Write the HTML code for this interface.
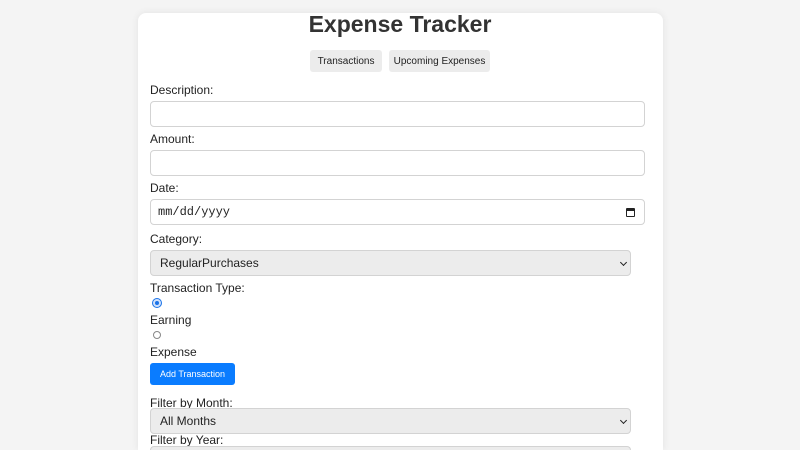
<!DOCTYPE html>
<html style="height:450px;overflow:hidden"><head><style>
*{box-sizing:border-box;margin:0;padding:0}
body{width:800px;height:450px;overflow:hidden;background:#f4f4f4;font-family:"Liberation Sans",sans-serif;color:#222;position:relative}
.card{position:absolute;left:138px;top:13px;width:525px;height:437px;background:#fff;border-radius:8px 8px 0 0;box-shadow:0 0 8px rgba(0,0,0,.08)}
.a{position:absolute}
h1{position:absolute;left:0;width:800px;top:11px;text-align:center;font-size:23px;font-weight:bold;color:#333}
.btn{position:absolute;top:50px;height:22px;background:#ececec;border-radius:3px;font-size:10px;line-height:23px;text-align:center;color:#222}
.lbl{position:absolute;left:150px;font-size:12px;color:#222}
.inp{position:absolute;left:150px;width:495px;height:26px;border:1px solid #d3d3d3;border-radius:4px;background:#fff}
.sel{position:absolute;left:150px;width:481px;height:26px;border:1px solid #d3d3d3;border-radius:4px;background:#ececec;font-size:12px;line-height:24px;padding-left:9px}
.chev{position:absolute;right:4px;top:9px;width:5px;height:5px;border-right:1.5px solid #222;border-bottom:1.5px solid #222;transform:rotate(45deg)}
.radio{position:absolute;left:153px;width:8px;height:8px;border-radius:50%}
</style></head><body>
<div class="card"></div>
<h1>Expense Tracker</h1>
<div class="btn" style="left:310px;width:72px">Transactions</div>
<div class="btn" style="left:389px;width:101px">Upcoming Expenses</div>
<div class="lbl" style="top:83px">Description:</div>
<div class="inp" style="top:101px"></div>
<div class="lbl" style="top:132px">Amount:</div>
<div class="inp" style="top:150px"></div>
<div class="lbl" style="top:181px">Date:</div>
<div class="inp" style="top:199px;font-family:'Liberation Mono',monospace;font-size:12px;line-height:24px;padding-left:7px;color:#222">mm/dd/yyyy<div class="a" style="right:9px;top:8px;width:9px;height:9px;border:1.5px solid #222;border-top-width:3px;border-radius:1px"></div></div>
<div class="lbl" style="top:232px">Category:</div>
<div class="sel" style="top:250px">RegularPurchases<div class="chev"></div></div>
<div class="lbl" style="top:281px">Transaction Type:</div>
<div class="radio" style="top:299px;background:#1a73e8;border:2px solid #cfe0fb;box-shadow:0 0 0 1px #1a73e8"></div>
<div class="lbl" style="top:313px">Earning</div>
<div class="radio" style="top:331px;border:1px solid #888"></div>
<div class="lbl" style="top:345px">Expense</div>
<div class="a" style="left:150px;top:363px;width:85px;height:22px;background:#0a7cff;border-radius:3px;color:#fff;font-size:9px;line-height:22px;text-align:center">Add Transaction</div>
<div class="lbl" style="top:396px">Filter by Month:</div>
<div class="sel" style="top:408px">All Months<div class="chev"></div></div>
<div class="lbl" style="top:433px">Filter by Year:</div>
<div class="sel" style="top:446px;height:4px;border-bottom:none;border-radius:4px 4px 0 0"></div>
</body></html>
